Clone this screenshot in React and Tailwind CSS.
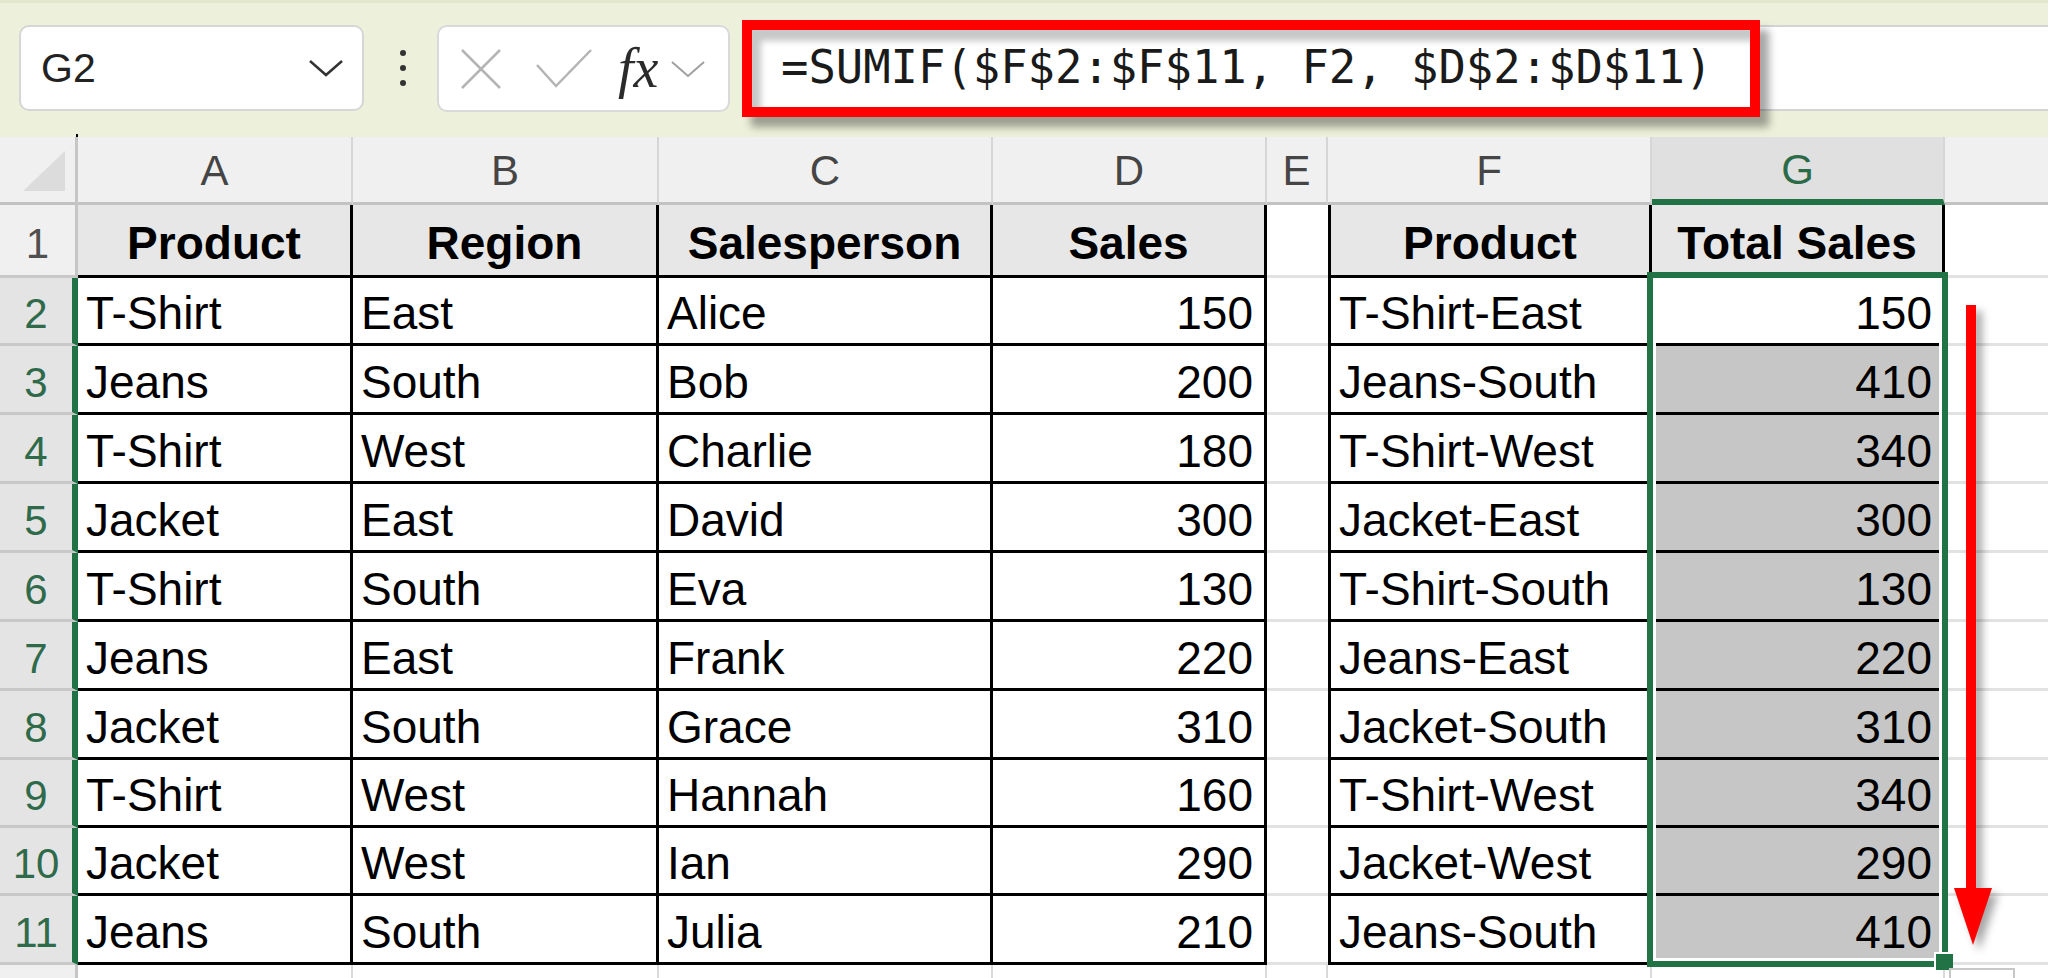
import React from 'react'

const leftRows = [
  ['T-Shirt', 'East', 'Alice', 150],
  ['Jeans', 'South', 'Bob', 200],
  ['T-Shirt', 'West', 'Charlie', 180],
  ['Jacket', 'East', 'David', 300],
  ['T-Shirt', 'South', 'Eva', 130],
  ['Jeans', 'East', 'Frank', 220],
  ['Jacket', 'South', 'Grace', 310],
  ['T-Shirt', 'West', 'Hannah', 160],
  ['Jacket', 'West', 'Ian', 290],
  ['Jeans', 'South', 'Julia', 210],
]

const rightRows = [
  ['T-Shirt-East', 150],
  ['Jeans-South', 410],
  ['T-Shirt-West', 340],
  ['Jacket-East', 300],
  ['T-Shirt-South', 130],
  ['Jeans-East', 220],
  ['Jacket-South', 310],
  ['T-Shirt-West', 340],
  ['Jacket-West', 290],
  ['Jeans-South', 410],
]

// row heights measured off the sheet, rows 2..11
const heights = [
  'h-[68px]', 'h-[69px]', 'h-[69px]', 'h-[69px]', 'h-[69px]',
  'h-[69px]', 'h-[69px]', 'h-[68px]', 'h-[68px]', 'h-[69px]',
]

const cols = [
  { label: 'A', w: 'w-[275px]' },
  { label: 'B', w: 'w-[306px]' },
  { label: 'C', w: 'w-[334px]' },
  { label: 'D', w: 'w-[274px]' },
  { label: 'E', w: 'w-[61px]' },
  { label: 'F', w: 'w-[324px]' },
  { label: 'G', w: 'w-[293px]', active: true },
]

const boxed = 'border-r-[3px] border-b-[3px] border-black'

const Toolbar = () => (
  <div className="h-[137px] bg-[#edf0da] border-t-[3px] border-[#e3e6cd] flex items-start pt-[22px] pl-[19px]">
    {/* name box */}
    <div className="w-[345px] h-[86px] shrink-0 bg-white rounded-[10px] border-2 border-[#d6d6d6] flex items-center justify-between pl-[20px] pr-[18px]">
      <span className="text-[41px] text-[#222] pt-[2px]">G2</span>
      <svg width="36" height="20" viewBox="0 0 36 20">
        <path d="M2 3 L18 17 L34 3" fill="none" stroke="#333" strokeWidth="2.5" />
      </svg>
    </div>

    <div className="ml-[36px] h-[86px] w-[6px] flex flex-col items-center justify-center gap-[9px]">
      <span className="w-[6px] h-[6px] rounded-full bg-[#333]" />
      <span className="w-[6px] h-[6px] rounded-full bg-[#333]" />
      <span className="w-[6px] h-[6px] rounded-full bg-[#333]" />
    </div>

    {/* cancel / enter / fx */}
    <div className="ml-[31px] w-[293px] h-[87px] shrink-0 bg-white rounded-[10px] border-2 border-[#d9d9d9] flex items-center pl-[21px]">
      <svg width="42" height="42" viewBox="0 0 42 42">
        <path d="M2 2 L40 40 M40 2 L2 40" stroke="#b4b4b4" strokeWidth="2.5" />
      </svg>
      <svg width="56" height="40" viewBox="0 0 56 40" className="ml-[34px]">
        <path d="M1 16 L20 37 L55 1" fill="none" stroke="#b4b4b4" strokeWidth="2.5" />
      </svg>
      <span className="ml-[26px] font-['Liberation_Serif',serif] italic text-[56px] leading-none text-[#2b2b2b] -mt-[2px]">fx</span>
      <svg width="36" height="18" viewBox="0 0 36 18" className="ml-[12px]">
        <path d="M2 2 L18 16 L34 2" fill="none" stroke="#a0a0a0" strokeWidth="2" />
      </svg>
    </div>

    {/* formula input */}
    <div className="ml-[12px] flex-1 h-[86px] relative bg-white border-y-2 border-[#d4d4d4] flex items-center pl-[39px]">
      <span className="font-['DejaVu_Sans_Mono',monospace] text-[45.5px] text-[#1a1a1a] whitespace-pre">
        =SUMIF($F$2:$F$11, F2, $D$2:$D$11)
      </span>
      <div className="absolute left-0 top-[-7px] w-[1018px] h-[97px] border-[10px] border-[#ff0000] pointer-events-none shadow-[9px_10px_8px_rgba(0,0,0,0.35),inset_9px_11px_6px_rgba(0,0,0,0.22)]" />
    </div>
  </div>
)

const HeaderRow = () => (
  <div className="flex h-[68px] bg-[#f0f0f0] text-[42px] text-[#454545]">
    <div className="w-[78px] shrink-0 h-full border-r-[3px] border-r-[#c6c6c6] border-b-[3px] border-b-[#c2c2c2] relative">
      <svg width="46" height="44" viewBox="0 0 46 44" className="absolute left-[21px] top-[12px]">
        <polygon points="44,2 44,42 2,42" fill="#dcdcdc" />
      </svg>
    </div>
    {cols.map((c) => (
      <div
        key={c.label}
        className={`${c.w} shrink-0 h-full flex items-center justify-center pt-[2px] border-r-2 border-r-[#d6d6d6] ${
          c.active
            ? 'bg-[#e0e0e0] text-[#2c6b47] border-b-[6px] border-b-[#217346]'
            : 'border-b-[3px] border-b-[#c2c2c2]'
        }`}
      >
        {c.label}
      </div>
    ))}
    <div className="flex-1 h-full border-b-[3px] border-b-[#c2c2c2]" />
  </div>
)

const TitleRow = () => (
  <div className="flex h-[73px] text-[46px]">
    <div className="w-[78px] shrink-0 h-full bg-[#f0f0f0] border-r-[3px] border-r-[#c6c6c6] border-b-[3px] border-b-[#c8c8c8] flex items-center justify-center pt-[6px] text-[42px] text-[#505050]">
      1
    </div>
    {['Product', 'Region', 'Salesperson', 'Sales'].map((t, i) => (
      <div
        key={t}
        className={`${cols[i].w} shrink-0 h-full bg-[#e7e7e7] ${boxed} flex items-center justify-center pt-[7px] font-bold`}
      >
        {t}
      </div>
    ))}
    <div className="w-[61px] shrink-0 h-full border-b-[3px] border-[#e2e2e2]" />
    <div className={`w-[324px] shrink-0 h-full bg-[#e7e7e7] border-l-[3px] ${boxed} flex items-center justify-center pt-[7px] font-bold`}>
      Product
    </div>
    <div className={`w-[293px] shrink-0 h-full bg-[#e7e7e7] ${boxed} flex items-center justify-center pt-[7px] font-bold`}>
      Total Sales
    </div>
    <div className="flex-1 h-full border-b-[3px] border-[#e2e2e2]" />
  </div>
)

const DataRow = ({ n, h, left, right }) => (
  <div className={`flex ${h} text-[46px] text-black`}>
    <div className="w-[78px] shrink-0 h-full bg-[#e4e4e4] border-r-[6px] border-r-[#217346] border-b-[3px] border-b-[#c8c8c8] flex items-center justify-center pt-[6px] text-[42px] text-[#2f6a4a]">
      {n}
    </div>
    <div className={`w-[275px] shrink-0 h-full ${boxed} flex items-center pl-[8px] pt-[6px]`}>{left[0]}</div>
    <div className={`w-[306px] shrink-0 h-full ${boxed} flex items-center pl-[8px] pt-[6px]`}>{left[1]}</div>
    <div className={`w-[334px] shrink-0 h-full ${boxed} flex items-center pl-[8px] pt-[6px]`}>{left[2]}</div>
    <div className={`w-[274px] shrink-0 h-full ${boxed} flex items-center justify-end pr-[11px] pt-[6px]`}>{left[3]}</div>
    <div className="w-[61px] shrink-0 h-full border-b-[3px] border-[#e2e2e2]" />
    <div className={`w-[324px] shrink-0 h-full border-l-[3px] ${boxed} flex items-center pl-[8px] pt-[6px]`}>{right[0]}</div>
    <div
      className={`w-[293px] shrink-0 h-full ${boxed} flex items-center justify-end pr-[10px] pt-[6px] ${
        n === 2 ? 'bg-white' : 'bg-[#c6c6c6]'
      }`}
    >
      {right[1]}
    </div>
    <div className="flex-1 h-full border-b-[3px] border-[#e2e2e2]" />
  </div>
)

const Grid = () => (
  <div className="relative">
    <span className="absolute left-[76px] top-[-3px] w-[2px] h-[6px] bg-black" />
    <HeaderRow />
    <TitleRow />
    {leftRows.map((row, i) => (
      <DataRow key={i} n={i + 2} h={heights[i]} left={row} right={rightRows[i]} />
    ))}
    {/* row 12, cut off */}
    <div className="flex h-[24px]">
      <div className="w-[78px] shrink-0 h-full bg-[#f0f0f0] border-r-[3px] border-r-[#c6c6c6]" />
      {cols.map((c) => (
        <div key={c.label} className={`${c.w} shrink-0 h-full border-r-2 border-[#dadada]`} />
      ))}
      <div className="flex-1 h-full" />
    </div>

    {/* selection G2:G11 */}
    <div className="absolute left-[1647px] top-[135px] w-[301px] h-[695px] border-[6px] border-[#217346] shadow-[inset_0_0_0_3px_#ffffff] pointer-events-none" />
    <div className="absolute left-[1934px] top-[815px] w-[19px] h-[18px] bg-[#217346] border-l-2 border-t-2 border-white" />
    <div className="absolute left-[1949px] top-[831px] w-[66px] h-[22px] bg-white border-2 border-[#c8c8c8]" />

    {/* red fill-down arrow */}
    <svg
      width="50"
      height="650"
      viewBox="0 0 50 650"
      className="absolute left-[1950px] top-[168px] drop-shadow-[6px_6px_4px_rgba(0,0,0,0.35)]"
    >
      <rect x="16" y="0" width="10" height="590" fill="#ff0000" />
      <polygon points="4,583 42,583 23,640" fill="#ff0000" />
    </svg>
  </div>
)

const App = () => {
  return (
    <div className="w-[2048px] h-[978px] overflow-hidden bg-white font-['Liberation_Sans',Arial,sans-serif]">
      <Toolbar />
      <Grid />
    </div>
  )
}

export default App
